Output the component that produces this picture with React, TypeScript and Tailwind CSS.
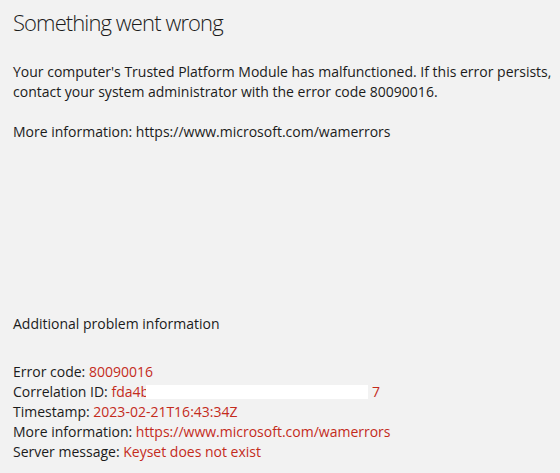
export default function App() {
  const red = "text-[#c42b1c]";
  return (
    <div className="w-[560px] h-[473px] bg-[#f2f2f2] overflow-hidden text-[#1b1b1b] [font-family:'Open_Sans','Noto_Sans',sans-serif]">
      <div className="pl-[13px] pt-[6px]">
        <h1 className="text-[22px] leading-[32px] font-[350] tracking-[-0.9px]">Something went wrong</h1>
        <div className="mt-[24px] text-[14px] leading-[20px]">
          <p>
            Your computer's Trusted Platform Module has malfunctioned. If this error persists,
            contact your system administrator with the error code 80090016.
          </p>
          <p className="mt-[20px]">More information: https://www.microsoft.com/wamerrors</p>
        </div>
        <div className="mt-[172px] text-[14px] leading-[20px]">
          <p>Additional problem information</p>
          <div className="mt-[28px]">
            <p>
              Error code: <span className={red}>80090016</span>
            </p>
            <p className="flex items-center">
              <span>Correlation ID:&nbsp;</span>
              <span className={red}>fda4b</span>
              <span className="inline-block w-[222px] h-[14px] bg-white -ml-[3px]" />
              <span className={`${red} ml-[4px]`}>7</span>
            </p>
            <p>
              Timestamp: <span className={red}>2023-02-21T16:43:34Z</span>
            </p>
            <p>
              More information: <span className={red}>https://www.microsoft.com/wamerrors</span>
            </p>
            <p>
              Server message: <span className={red}>Keyset does not exist</span>
            </p>
          </div>
        </div>
      </div>
    </div>
  );
}
